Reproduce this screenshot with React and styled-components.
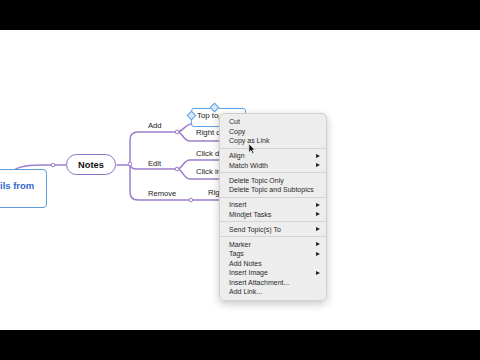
import React from 'react';
import styled, { createGlobalStyle } from 'styled-components';

const GlobalStyle = createGlobalStyle`
  html, body {
    margin: 0;
    padding: 0;
    background: #000;
  }
  body {
    font-family: "Liberation Sans", Arial, sans-serif;
  }
`;

const LINE = '#9a7fcc';
const MENU_LEFT = 219;

const menuGroups = [
  [{ label: 'Cut' }, { label: 'Copy' }, { label: 'Copy as Link' }],
  [{ label: 'Align', sub: true }, { label: 'Match Width', sub: true }],
  [{ label: 'Delete Topic Only' }, { label: 'Delete Topic and Subtopics' }],
  [{ label: 'Insert', sub: true }, { label: 'Mindjet Tasks', sub: true }],
  [{ label: 'Send Topic(s) To', sub: true }],
  [
    { label: 'Marker', sub: true },
    { label: 'Tags', sub: true },
    { label: 'Add Notes' },
    { label: 'Insert Image', sub: true },
    { label: 'Insert Attachment...' },
    { label: 'Add Link...' },
  ],
];

// subtopics sit partly under the context menu, so they are cut at its left edge
const subTopics = [
  { text: 'Right click', x: 196, y: 98 },
  { text: 'Click directly', x: 196, y: 119 },
  { text: 'Click inside', x: 196, y: 137 },
  { text: 'Right click', x: 208, y: 158 },
];

const Connectors = () => (
  <Lines viewBox="0 0 480 300" width="480" height="300">
    <g fill="none" stroke={LINE} strokeWidth="1.5" strokeLinecap="round">
      <path d="M 14 140 C 24 134, 38 135, 53 135 L 66 135" />
      <path d="M 117 135 L 130 135" />
      <path d="M 177 102 L 138 102 Q 130 102 130 110 L 130 162 Q 130 170 138 170 L 220 170" />
      <path d="M 130 134 Q 130 139 137 139 L 177 139" />
      <path d="M 177 102 C 183 102, 184 95, 191 94" />
      <path d="M 177 102 C 183 102, 183 111, 190 111 L 220 111" />
      <path d="M 177 139 C 183 139, 183 130, 190 130 L 220 130" />
      <path d="M 177 139 C 183 139, 183 149, 190 149 L 220 149" />
    </g>
    <g fill="#fff" stroke={LINE} strokeWidth="1">
      <circle cx="53" cy="135" r="1.8" />
      <circle cx="130" cy="134" r="1.8" />
      <circle cx="177" cy="102" r="1.8" />
      <circle cx="177" cy="139" r="1.8" />
      <circle cx="191" cy="170" r="1.8" />
    </g>
  </Lines>
);

const Cursor = () => (
  <Pointer viewBox="0 0 10 15" width="8" height="12">
    <path d="M1 1 L1 12 L3.8 9.4 L5.8 13.6 L7.6 12.8 L5.6 8.7 L9 8.7 Z" fill="#111" stroke="#fff" strokeWidth="0.9" strokeLinejoin="round" />
  </Pointer>
);

const App = () => {
  return (
    <Frame>
      <GlobalStyle />
      <Letterbox />
      <Canvas>
        <Connectors />

        <SourceBox>
          <SourceText>ils from</SourceText>
        </SourceBox>

        <CentralTopic>Notes</CentralTopic>

        <Label $x={148} $y={91}>Add</Label>
        <Label $x={148} $y={129}>Edit</Label>
        <Label $x={148} $y={159}>Remove</Label>

        <Selected>
          <Handle $x={19} $y={-5} />
          <Handle $x={-4} $y={3} />
          <SelectedText>Top topic</SelectedText>
        </Selected>
        {subTopics.map((t, i) => (
          <SubTopic key={i} $x={t.x} $y={t.y} $w={MENU_LEFT - t.x}>
            {t.text}
          </SubTopic>
        ))}

        <Menu>
          {menuGroups.map((group, gi) => (
            <React.Fragment key={gi}>
              {gi > 0 && <Separator />}
              {group.map((item) => (
                <MenuItem key={item.label}>
                  <span>{item.label}</span>
                  {item.sub && <Arrow />}
                </MenuItem>
              ))}
            </React.Fragment>
          ))}
        </Menu>

        <Cursor />
      </Canvas>
      <Letterbox />
    </Frame>
  );
};

export default App;

const Frame = styled.div`
  width: 480px;
  height: 360px;
  display: flex;
  flex-direction: column;
  overflow: hidden;
`;

const Letterbox = styled.div`
  height: 30px;
  flex-shrink: 0;
  background: #000;
`;

const Canvas = styled.div`
  position: relative;
  height: 300px;
  background: #fff;
  overflow: hidden;
`;

const Lines = styled.svg`
  position: absolute;
  left: 0;
  top: 0;
`;

const SourceBox = styled.div`
  position: absolute;
  left: -14px;
  top: 139px;
  width: 61px;
  height: 39px;
  box-sizing: border-box;
  border: 1.5px solid #5b9bd8;
  border-radius: 4px;
  background: #fff;
  padding: 5px 0 0 13px;
`;

const SourceText = styled.span`
  font-size: 9.5px;
  font-weight: 700;
  color: #3467d0;
  white-space: nowrap;
`;

const CentralTopic = styled.div`
  position: absolute;
  left: 66px;
  top: 124px;
  width: 48px;
  height: 19px;
  border: 1.5px solid #8c6fc6;
  border-radius: 11px;
  background: #fff;
  display: flex;
  align-items: center;
  justify-content: center;
  font-size: 9.3px;
  font-weight: 700;
  color: #111;
`;

const Label = styled.div`
  position: absolute;
  left: ${(p) => p.$x}px;
  top: ${(p) => p.$y}px;
  font-size: 7.6px;
  line-height: 10px;
  color: #222;
  white-space: nowrap;
`;

const SubTopic = styled.div`
  position: absolute;
  left: ${(p) => p.$x}px;
  top: ${(p) => p.$y}px;
  max-width: ${(p) => p.$w}px;
  overflow: hidden;
  font-size: 7.8px;
  line-height: 10px;
  color: #1a1a1a;
  white-space: nowrap;
`;

const Selected = styled.div`
  position: absolute;
  left: 191px;
  top: 78px;
  width: 48px;
  height: 15px;
  border: 1.5px solid #5fa3ea;
  border-radius: 3px;
  background: #fff;
  padding: 2px 0 0 5px;
  box-sizing: content-box;
`;

const SelectedText = styled.div`
  width: ${MENU_LEFT - 197}px;
  overflow: hidden;
  font-size: 7.8px;
  line-height: 10px;
  color: #1a1a1a;
  white-space: nowrap;
`;

const Handle = styled.div`
  position: absolute;
  left: ${(p) => p.$x}px;
  top: ${(p) => p.$y}px;
  width: 5px;
  height: 5px;
  background: #d6e8fb;
  border: 1px solid #5fa3ea;
  transform: rotate(45deg);
`;

const Menu = styled.div`
  position: absolute;
  left: ${MENU_LEFT}px;
  top: 83px;
  width: 106px;
  padding: 3px 0;
  background: rgba(236, 236, 236, 0.97);
  border: 0.5px solid #cfcfcf;
  border-radius: 5px;
  box-shadow: 0 3px 9px rgba(0, 0, 0, 0.22);
  display: flex;
  flex-direction: column;
`;

const MenuItem = styled.div`
  height: 9.5px;
  display: flex;
  align-items: center;
  justify-content: space-between;
  padding: 0 6px 0 9px;
  font-size: 7px;
  color: #2a2a2a;
  white-space: nowrap;
`;

const Arrow = styled.span`
  width: 0;
  height: 0;
  border-top: 2.5px solid transparent;
  border-bottom: 2.5px solid transparent;
  border-left: 4px solid #222;
`;

const Separator = styled.div`
  height: 1px;
  margin: 2.25px 0;
  background: #d3d3d3;
`;

const Pointer = styled.svg`
  position: absolute;
  left: 248px;
  top: 113px;
`;
